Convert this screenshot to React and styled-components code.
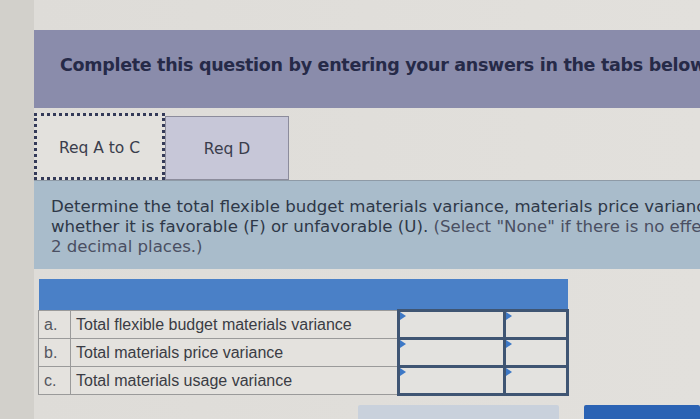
import React from "react";
import styled, { createGlobalStyle } from "styled-components";

const Global = createGlobalStyle`
  html, body { margin: 0; padding: 0; }
  body { background: #d8d6d2; overflow: hidden; }
`;

const Page = styled.div`
  width: 700px;
  height: 419px;
  overflow: hidden;
  box-sizing: border-box;
  padding: 30px 0 0 34px;
  background: linear-gradient(90deg, #d2d0cb 0px, #d2d0cb 34px, #dedcd8 34px, #e2e0dc 100%);
`;

const Banner = styled.div`
  height: 78px;
  background: #8a8cab;
  display: flex;
  align-items: center;
  padding-left: 26px;
  padding-bottom: 8px;
  box-sizing: border-box;
  white-space: nowrap;
  overflow: hidden;
  font-family: "DejaVu Sans", Verdana, sans-serif;
  font-weight: bold;
  font-size: 17.5px;
  letter-spacing: -0.3px;
  color: #262a48;
`;

const TabRow = styled.div`
  display: flex;
  margin-top: 5px;
  height: 67px;
  border-bottom: 1px solid #8e9aa6;
`;

const Tab = styled.div`
  box-sizing: border-box;
  width: ${(p) => p.$w}px;
  display: flex;
  align-items: center;
  justify-content: center;
  font-family: "DejaVu Sans", Verdana, sans-serif;
  font-size: 15.5px;
  color: #3a3d4c;
  padding-top: 2px;
  background: ${(p) => (p.$active ? "#e3e1dd" : "#c7c7d8")};
  border: ${(p) => (p.$active ? "3px dotted #343a58" : "1px solid #8c8c9c")};
  margin-top: ${(p) => (p.$active ? 0 : 3)}px;
`;

const Instructions = styled.div`
  height: 88px;
  box-sizing: border-box;
  background: #a9bccb;
  padding: 16px 0 0 17px;
  white-space: nowrap;
  overflow: hidden;
  font-family: "DejaVu Sans", Verdana, sans-serif;
  font-size: 16.6px;
  line-height: 20px;
  color: #2e3848;
`;

const Muted = styled.span`
  color: #4a4f62;
`;

const Table = styled.table`
  margin: 10px 0 0 4px;
  border-collapse: collapse;
  width: 529px;
  table-layout: fixed;
  font-family: "Liberation Sans", Arial, sans-serif;
  font-size: 16px;
  color: #3a3c44;
`;

const HeadCell = styled.th`
  height: 30px;
  padding: 0;
  background: #4a80c7;
`;

const Cell = styled.td`
  height: 27px;
  padding: 0 0 0 ${(p) => p.$pad || 0}px;
  background: #e4e2de;
  border: 1px solid #9a9a9a;
  white-space: nowrap;
  color: ${(p) => (p.$light ? "#55575e" : "#3a3c44")};
`;

const InputCell = styled.td`
  height: 25px;
  padding: 0;
  position: relative;
  background: #e3e2df;
  border: 3px solid #3f5573;
`;

const Flag = styled.span`
  position: absolute;
  left: 0;
  top: 0;
  width: 0;
  height: 0;
  border-top: 4px solid transparent;
  border-bottom: 4px solid transparent;
  border-left: 6px solid #3d78c6;
`;

const ButtonRow = styled.div`
  display: flex;
  margin-top: 9px;
  height: 20px;
`;

const Btn = styled.div`
  width: ${(p) => p.$w}px;
  margin-left: ${(p) => p.$ml}px;
  background: ${(p) => p.$bg};
  border-radius: 2px 2px 0 0;
`;

const rows = [
  ["a.", "Total flexible budget materials variance"],
  ["b.", "Total materials price variance"],
  ["c.", "Total materials usage variance"],
];

export default function App() {
  return (
    <>
      <Global />
      <Page>
        <Banner>Complete this question by entering your answers in the tabs below.</Banner>
        <TabRow>
          <Tab $w={131} $active>Req A to C</Tab>
          <Tab $w={124}>Req D</Tab>
        </TabRow>
        <Instructions>
          Determine the total flexible budget materials variance, materials price variance, and
          <br />
          whether it is favorable (F) or unfavorable (U). <Muted>(Select "None" if there is no effect (i.e., zero variance). Round your answers to</Muted>
          <br />
          <Muted>2 decimal places.)</Muted>
        </Instructions>
        <Table>
          <colgroup>
            <col style={{ width: 32 }} />
            <col style={{ width: 328 }} />
            <col style={{ width: 106 }} />
            <col style={{ width: 63 }} />
          </colgroup>
          <thead>
            <tr>
              <HeadCell colSpan={4} />
            </tr>
          </thead>
          <tbody>
            {rows.map(([k, label]) => (
              <tr key={k}>
                <Cell $pad={5} $light>{k}</Cell>
                <Cell $pad={5}>{label}</Cell>
                <InputCell><Flag /></InputCell>
                <InputCell><Flag /></InputCell>
              </tr>
            ))}
          </tbody>
        </Table>
        <ButtonRow>
          <Btn $w={207} $ml={324} $bg="#c9d1dc" />
          <Btn $w={120} $ml={25} $bg="#2b63b4" />
        </ButtonRow>
      </Page>
    </>
  );
}
